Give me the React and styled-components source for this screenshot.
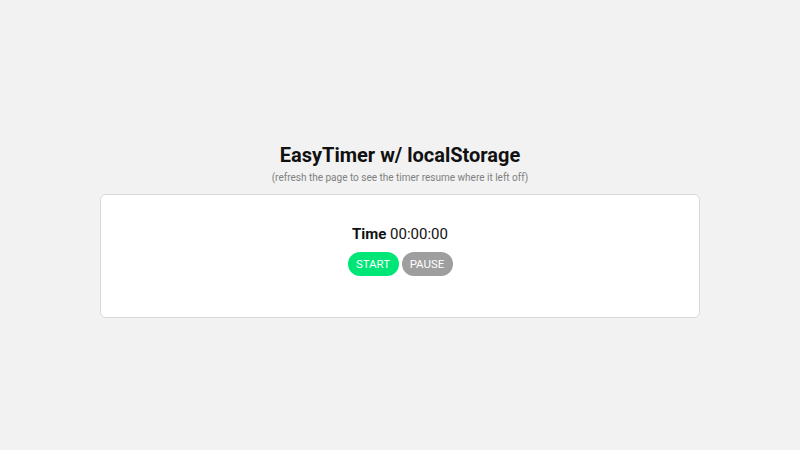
import React from 'react'
import styled, { createGlobalStyle } from 'styled-components'

const GlobalStyle = createGlobalStyle`
    html, body {
        margin: 0;
        background: #f2f2f2;
        font-family: Roboto, "Liberation Sans", sans-serif;
        color: #111;
    }
`

const Page = styled.div`
    display: flex;
    flex-direction: column;
    align-items: center;
    padding-top: 143px;
`

const Title = styled.h1`
    margin: 0;
    font-size: 20px;
    font-weight: 700;
    line-height: 24px;
`

const Subtitle = styled.p`
    margin: 4px 0 0;
    font-size: 10px;
    line-height: 14px;
    color: #808080;
`

const Card = styled.div`
    box-sizing: border-box;
    width: 600px;
    height: 124px;
    margin-top: 9px;
    background: #fff;
    border: 1px solid #d8d8d8;
    border-radius: 6px;
    display: flex;
    flex-direction: column;
    align-items: center;
    padding-top: 29px;
`

const TimeLine = styled.div`
    font-size: 15px;
    line-height: 20px;

    b {
        font-weight: 700;
    }
`

const Buttons = styled.div`
    display: flex;
    gap: 3px;
    margin-top: 8px;
`

const Button = styled.button`
    width: 51px;
    height: 24px;
    border: none;
    border-radius: 12px;
    padding: 0;
    font-family: inherit;
    font-size: 11.5px;
    font-weight: 400;
    color: #fff;
    text-transform: uppercase;
    background: ${(p) => p.$color};
    cursor: pointer;
`

const App = () => {
    return (
        <>
            <GlobalStyle />
            <Page>
                <Title>EasyTimer w/ localStorage</Title>
                <Subtitle>(refresh the page to see the timer resume where it left off)</Subtitle>
                <Card>
                    <TimeLine>
                        <b>Time</b> 00:00:00
                    </TimeLine>
                    <Buttons>
                        <Button $color="#00e676">Start</Button>
                        <Button $color="#9e9e9e">Pause</Button>
                    </Buttons>
                </Card>
            </Page>
        </>
    )
}

export default App
